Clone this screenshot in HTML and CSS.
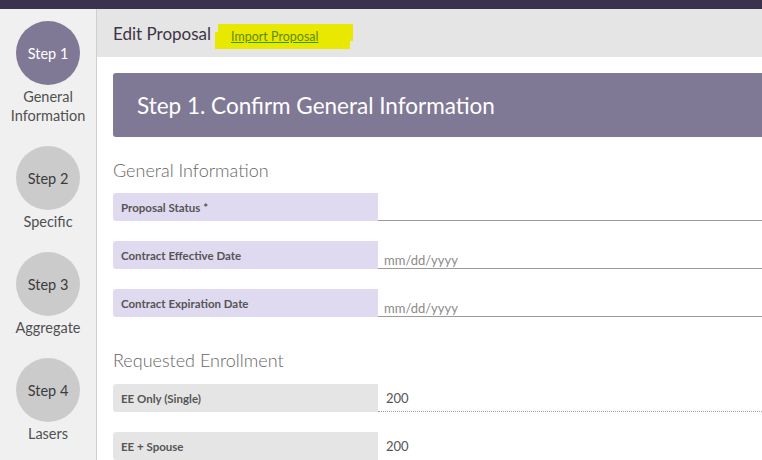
FILE: index.html
```html
<!DOCTYPE html>
<html lang="en">
<head>
<meta charset="utf-8">
<title>Edit Proposal</title>
<link rel="stylesheet" href="styles.css">
</head>
<body>
<div class="topbar"></div>
<div class="layout">
  <nav class="sidebar">
    <div class="step">
      <div class="circle active">Step 1</div>
      <div class="step-label">General<br>Information</div>
    </div>
    <div class="step">
      <div class="circle">Step 2</div>
      <div class="step-label">Specific</div>
    </div>
    <div class="step">
      <div class="circle">Step 3</div>
      <div class="step-label">Aggregate</div>
    </div>
    <div class="step">
      <div class="circle">Step 4</div>
      <div class="step-label">Lasers</div>
    </div>
  </nav>
  <main class="main">
    <header class="header">
      <span class="header-title">Edit Proposal</span>
      <span class="highlight"><a class="import-link" href="#">Import Proposal</a></span>
    </header>
    <div class="content">
      <div class="banner">Step 1. Confirm General Information</div>
      <h2 class="section-title first">General Information</h2>
      <div class="fields">
        <div class="field">
          <div class="label lavender">Proposal Status *</div>
          <div class="input"></div>
        </div>
        <div class="field">
          <div class="label lavender">Contract Effective Date</div>
          <div class="input placeholder">mm/dd/yyyy</div>
        </div>
        <div class="field">
          <div class="label lavender">Contract Expiration Date</div>
          <div class="input placeholder">mm/dd/yyyy</div>
        </div>
      </div>
      <h2 class="section-title">Requested Enrollment</h2>
      <div class="fields">
        <div class="field">
          <div class="label gray">EE Only (Single)</div>
          <div class="input value dotted">200</div>
        </div>
        <div class="field">
          <div class="label gray">EE + Spouse</div>
          <div class="input value">200</div>
        </div>
      </div>
    </div>
  </main>
</div>
</body>
</html>
```
FILE: styles.css
```css
* { box-sizing: border-box; }
html, body {
  margin: 0;
  padding: 0;
  width: 762px;
  height: 460px;
  overflow: hidden;
  background: #ffffff;
  font-family: "Lato", "Open Sans", sans-serif;
}
.topbar {
  height: 9px;
  background: #3a3350;
}
.layout {
  display: flex;
  height: 451px;
}
.sidebar {
  width: 97px;
  flex: none;
  background: #f0f0f0;
  border-right: 1px solid #cfcfcf;
  padding-top: 12px;
  display: flex;
  flex-direction: column;
}
.step {
  flex: none;
  display: flex;
  flex-direction: column;
  align-items: center;
  margin-bottom: 21px;
}
.circle {
  width: 64px;
  height: 64px;
  border-radius: 50%;
  background: #cbcbcb;
  color: #3c3c3c;
  font-size: 14.5px;
  display: flex;
  align-items: center;
  justify-content: center;
  margin-bottom: 2px;
}
.circle.active {
  background: #807996;
  color: #ffffff;
}
.step-label {
  font-size: 14.5px;
  line-height: 19px;
  color: #505050;
  text-align: center;
}
.main {
  flex: 1;
  min-width: 0;
  display: flex;
  flex-direction: column;
}
.header {
  height: 48px;
  flex: none;
  background: #e5e5e5;
  display: flex;
  align-items: center;
  padding-left: 16px;
}
.header-title {
  font-size: 17px;
  color: #3d3446;
  font-weight: 400;
  margin-right: 7px;
}
.highlight {
  display: inline-block;
  align-self: flex-start;
  margin-top: 15px;
  width: 135px;
  height: 17px;
  line-height: 17px;
  padding: 2px 0 0 13px;
  background: #e8e800;
  box-shadow: -3px 8px 0 #e8e800;
}
.import-link {
  font-size: 12.5px;
  color: #5e8c00;
  text-decoration: underline;
  text-decoration-color: #2da000;
}
.content {
  padding: 16px 0 0 16px;
}
.banner {
  height: 64px;
  background: #807996;
  border-radius: 3px 0 0 3px;
  color: #ffffff;
  font-size: 22.5px;
  display: flex;
  align-items: center;
  padding-left: 24px;
}
.section-title {
  margin: 31px 0 12px 0;
  height: 24px;
  line-height: 24px;
  font-size: 18px;
  font-weight: 300;
  color: #666666;
}
.section-title.first {
  margin-top: 21px;
  margin-bottom: 11px;
}
.fields {
  display: flex;
  flex-direction: column;
  gap: 20px;
}
.field {
  display: flex;
  height: 28px;
}
.label {
  width: 265px;
  flex: none;
  border-radius: 3px 0 0 3px;
  font-size: 11.5px;
  font-weight: 700;
  color: #555555;
  display: flex;
  align-items: center;
  padding-left: 8px;
}
.label.lavender { background: #e0daf0; }
.label.gray { background: #e5e5e5; }
.input {
  flex: 1;
  border-bottom: 1px solid #9a9a9a;
  display: flex;
  align-items: flex-end;
  padding: 0 0 0 6px;
  font-size: 13px;
  line-height: 16px;
}
.input.placeholder { color: #8a8a8a; }
.input.value {
  color: #555555;
  align-items: center;
  padding-left: 8px;
  border-bottom: none;
}
.input.value.dotted {
  border-bottom: 1px dotted #9a9a9a;
}
```
